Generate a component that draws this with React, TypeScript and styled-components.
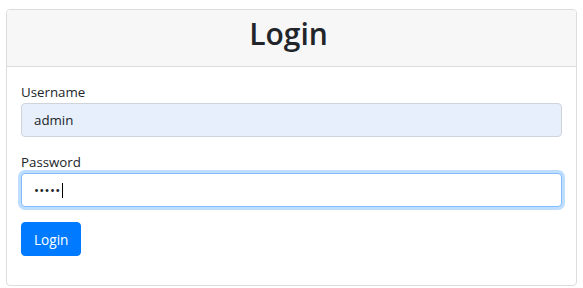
import React from 'react';
import styled, { createGlobalStyle } from 'styled-components';

const GlobalStyle = createGlobalStyle`
  html, body {
    margin: 0;
    padding: 0;
    background: #fff;
  }
  body {
    font-family: 'Open Sans', 'Noto Sans', sans-serif;
    color: #212529;
  }
`;

const Page = styled.div`
  padding: 9px 6px 0 6px;
`;

const Card = styled.div`
  border: 1px solid #dcdcdc;
  border-radius: 4px;
  background: #fff;
  overflow: hidden;
`;

const CardHeader = styled.div`
  box-sizing: border-box;
  height: 57px;
  padding-bottom: 9px;
  display: flex;
  align-items: center;
  justify-content: center;
  background: #f7f7f7;
  border-bottom: 1px solid #dcdcdc;
`;

const Title = styled.h2`
  margin: 0;
  font-size: 30px;
  font-weight: 600;
  line-height: 1;
  color: #212529;
  padding-right: 6px;
`;

const CardBody = styled.form`
  padding: 15px 14px 29px 14px;
  display: flex;
  flex-direction: column;
`;

const Group = styled.div`
  display: flex;
  flex-direction: column;
  margin-bottom: 15px;
`;

const Label = styled.label`
  font-size: 13.3px;
  line-height: 20px;
  margin-bottom: 1px;
  color: #212529;
`;

const FieldWrap = styled.div`
  position: relative;
`;

const Input = styled.input<{ focused?: boolean; autofilled?: boolean }>`
  box-sizing: border-box;
  width: 100%;
  height: 34px;
  padding: 0 12px;
  font-family: 'Open Sans', 'Noto Sans', sans-serif;
  font-size: 13.3px;
  color: #212529;
  border-radius: 4px;
  outline: none;
  border: 1px solid ${({ focused }) => (focused ? '#80bdff' : '#ced4da')};
  background: ${({ autofilled }) => (autofilled ? '#e6effb' : '#fff')};
  box-shadow: ${({ focused }) => (focused ? '0 0 0 3px rgba(0, 123, 255, 0.25)' : 'none')};
  letter-spacing: ${({ type }) => (type === 'password' ? '0.3px' : 'normal')};
`;

const Caret = styled.span`
  position: absolute;
  left: 41px;
  top: 10px;
  width: 1px;
  height: 15px;
  background: #000;
`;

const Button = styled.button`
  align-self: flex-start;
  height: 34px;
  padding: 0 12px;
  border: 1px solid #007bff;
  border-radius: 4px;
  background: #007bff;
  color: #fff;
  font-family: 'Open Sans', 'Noto Sans', sans-serif;
  font-size: 13.6px;
  cursor: pointer;
`;

const App = () => {
  return (
    <Page>
      <GlobalStyle />
      <Card>
        <CardHeader>
          <Title>Login</Title>
        </CardHeader>
        <CardBody onSubmit={(e) => e.preventDefault()}>
          <Group>
            <Label htmlFor="username">Username</Label>
            <Input id="username" type="text" defaultValue="admin" autofilled readOnly />
          </Group>
          <Group>
            <Label htmlFor="password">Password</Label>
            <FieldWrap>
              <Input id="password" type="password" defaultValue="admin" focused readOnly />
              <Caret />
            </FieldWrap>
          </Group>
          <Button type="submit">Login</Button>
        </CardBody>
      </Card>
    </Page>
  );
};

export default App;
